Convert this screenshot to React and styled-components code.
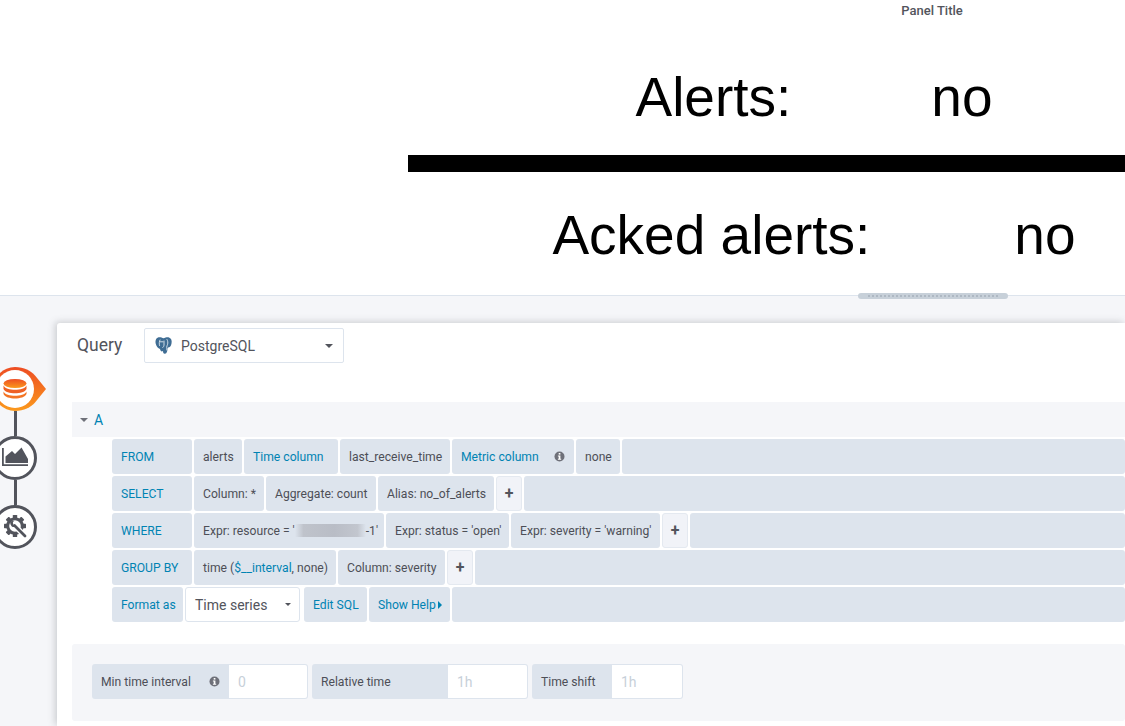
import React from 'react';
import styled, { createGlobalStyle } from 'styled-components';

const GlobalStyle = createGlobalStyle`
  html, body {
    margin: 0;
    padding: 0;
    background: #fff;
    font-family: Roboto, "Liberation Sans", sans-serif;
  }
  * { box-sizing: border-box; }
`;

const Page = styled.div`
  position: relative;
  width: 1125px;
  height: 726px;
  overflow: hidden;
  display: flex;
  flex-direction: column;
`;

const Preview = styled.section`
  height: 296px;
  flex: none;
  padding-left: 408px;
  border-bottom: 1px solid #dde4ed;
  background: #fff;
  overflow: hidden;
`;

const PreviewPanel = styled.div`
  width: 1048px;
  display: flex;
  flex-direction: column;
`;

const PanelTitle = styled.div`
  height: 22px;
  line-height: 22px;
  text-align: center;
  font-size: 13px;
  font-weight: 500;
  color: #52545c;
`;

const StatRow = styled.div`
  width: 812px;
  height: 64px;
  margin-top: ${(p) => p.$top}px;
  display: flex;
  justify-content: center;
  gap: ${(p) => p.$gap}px;
  font-family: "Liberation Sans", Arial, sans-serif;
  font-size: 55px;
  line-height: 64px;
  color: #000;
  white-space: nowrap;
`;

const Rule = styled.div`
  height: 17px;
  margin-top: ${(p) => p.$top}px;
  background: #000;
`;

const Splitter = styled.div`
  position: absolute;
  left: 858px;
  top: 293px;
  width: 150px;
  height: 6px;
  border-radius: 3px;
  background: #c7d0d9;
  &::after {
    content: '';
    position: absolute;
    left: 10px;
    right: 10px;
    top: 2px;
    height: 2px;
    background: repeating-linear-gradient(90deg, #aeb8c3 0 2px, transparent 2px 4px);
  }
`;

const Editor = styled.div`
  flex: 1;
  display: flex;
  min-height: 0;
  background: #f5f6f9;
`;

const Sidebar = styled.nav`
  width: 57px;
  flex: none;
  margin-left: -7px;
  margin-right: 7px;
  padding-top: 71px;
  display: flex;
  flex-direction: column;
  align-items: flex-start;
`;

const Step = styled.div`
  width: 44px;
  height: 44px;
  border: 3px solid #52545c;
  border-radius: 50%;
  background: #fff;
  display: flex;
  align-items: center;
  justify-content: center;
  color: #52545c;
`;

const ActiveStep = styled.svg`
  display: block;
  width: 54px;
  height: 44px;
  overflow: visible;
`;

const Connector = styled.div`
  width: 3px;
  height: 25px;
  margin-left: 20.5px;
  background: #52545c;
`;

const QueryPanel = styled.main`
  flex: 1;
  min-width: 0;
  margin-top: 27px;
  background: #fff;
  border-top-left-radius: 3px;
  box-shadow: -2px -1px 7px rgba(82, 84, 92, 0.26);
`;

const Header = styled.header`
  display: flex;
  align-items: center;
  height: 35px;
  margin-top: 5px;
  padding-left: 20px;
`;

const HeaderTitle = styled.h2`
  width: 67px;
  margin: -2px 0 0;
  font-size: 17.5px;
  font-weight: 400;
  color: #52545c;
`;

const DataSourceSelect = styled.div`
  width: 200px;
  height: 35px;
  padding: 0 10px;
  display: flex;
  align-items: center;
  gap: 9px;
  border: 1px solid #dde4ed;
  border-radius: 2px;
  font-size: 14px;
  color: #52545c;
`;

const Caret = styled.span`
  width: 0;
  height: 0;
  flex: none;
  margin-left: auto;
  border-left: ${(p) => p.$size || 4}px solid transparent;
  border-right: ${(p) => p.$size || 4}px solid transparent;
  border-top: ${(p) => p.$size || 4}px solid #52545c;
`;

const QueryHeader = styled.div`
  height: 35px;
  margin: 39px 0 2px 15px;
  padding-left: 8px;
  display: flex;
  align-items: center;
  gap: 6px;
  background: #f5f6f9;
  font-size: 14px;
  color: #0083b3;
`;

const CollapseCaret = styled(Caret)`
  margin-left: 0;
  border-top-color: #6e7079;
`;

const Rows = styled.div`
  margin-left: 55px;
  display: flex;
  flex-direction: column;
  gap: 2px;
`;

const Row = styled.div`
  display: flex;
  gap: 2px;
  height: 35px;
`;

const Cell = styled.div`
  flex: none;
  width: ${(p) => p.$width}px;
  margin-left: ${(p) => p.$offset || 0}px;
  padding: 0 9px;
  display: flex;
  align-items: center;
  border-radius: 3px;
  background: #dde4ed;
  font-size: 12.15px;
  white-space: nowrap;
  color: ${(p) => (p.$blue ? '#0083b3' : '#4d4f57')};
`;

const Macro = styled.span`
  color: #0083b3;
`;

const Filler = styled.div`
  flex: 1;
  border-radius: 3px;
  background: #dde4ed;
`;

const AddButton = styled.div`
  flex: none;
  width: 26px;
  display: flex;
  align-items: center;
  justify-content: center;
  border: 1px solid #e4e9f0;
  border-radius: 3px;
  background: #f1f3f8;
  font-size: 16px;
  font-weight: 700;
  color: #52545c;
`;

const FormatSelect = styled.div`
  flex: none;
  width: 115px;
  padding: 0 8px 0 9px;
  display: flex;
  align-items: center;
  border: 1px solid #dde4ed;
  border-radius: 3px;
  background: #fff;
  font-size: 14px;
  color: #52545c;
`;

const Redacted = styled.span`
  display: inline-block;
  flex: none;
  width: 71px;
  height: 13px;
  background: linear-gradient(90deg, #dde4ed, #bfc3cb 12%, #b9bdc6 55%, #c2c6ce 88%, #dde4ed);
`;

const TinyArrow = styled.span`
  display: inline-block;
  margin-left: 2px;
  border-top: 4px solid transparent;
  border-bottom: 4px solid transparent;
  border-left: 4px solid #0083b3;
`;

const Options = styled.section`
  margin: 22px 0 0 15px;
  height: 77px;
  padding: 20px;
  display: flex;
  gap: 4px;
  border-radius: 3px;
  background: #f5f6f9;
`;

const OptionGroup = styled.div`
  display: flex;
  height: 35px;
`;

const OptionLabel = styled.div`
  width: ${(p) => p.$width}px;
  padding: 0 9px;
  display: flex;
  align-items: center;
  justify-content: space-between;
  border-radius: 3px 0 0 3px;
  background: #dde4ed;
  font-size: 12.15px;
  color: #4d4f57;
`;

const OptionInput = styled.div`
  width: ${(p) => p.$width}px;
  padding: 0 9px;
  display: flex;
  align-items: center;
  border: 1px solid #dde4ed;
  border-left: 0;
  border-radius: 0 3px 3px 0;
  background: #fff;
  font-size: 14px;
  color: #c7d0d9;
`;

const InfoIcon = ({ style }) => (
  <svg width="11" height="11" viewBox="0 0 11 11" style={style} aria-hidden="true">
    <circle cx="5.5" cy="5.5" r="5" fill="#6e7079" />
    <rect x="4.7" y="2" width="1.7" height="1.6" fill="#fff" />
    <path d="M3.9 4.4h2.5v3.3h.8v1H3.9v-1h.8V5.4h-.8z" fill="#fff" />
  </svg>
);

const PostgresIcon = () => (
  <svg width="17" height="17" viewBox="0 0 17 17" aria-hidden="true">
    <path
      d="M3 .5C5 0 7 .8 8.500 1.300 10 .8 12.500 0 14 .5c2.500.8 3 3.500 2.500 6C16 9 15 10.500 13 10.500l-.5 1c0 2-.5 5-2.500 5.300-1.500.2-2-1.300-2-2.800-1.500 1-2.500 0-3-2-2-.5-3.500-2.500-4.200-5C.2 4.500.5 1.500 3 .5z"
      fill="#3f6d94"
    />
    <path
      d="M5 3c-.8 1.500-1 3.500-.5 5.500M5 4.800h3M12 2.500c.9 1.400 1 3.200.6 4.800-.2 1-.9 1.800-.9 3 0 .9.200 1.700.2 2.700M9 4v4.200c0 1-.5 1.600-1.200 2.300"
      fill="none"
      stroke="#dfe8ef"
      strokeWidth="0.9"
      strokeLinecap="round"
    />
  </svg>
);

const DatabaseStep = () => (
  <ActiveStep viewBox="0 0 54 44">
    <defs>
      <linearGradient id="stepOrange" x1="0" y1="0" x2="0" y2="1">
        <stop offset="0" stopColor="#ed4c23" />
        <stop offset="1" stopColor="#fb9a1d" />
      </linearGradient>
    </defs>
    <path
      d="M22 0A22 22 0 0 0 22 44C31 44 38 40 42 35.500L53 22 42 8.500C38 4 31 0 22 0z"
      fill="url(#stepOrange)"
    />
    <circle cx="22" cy="22" r="19" fill="#fff" />
    <ellipse cx="22" cy="16.500" rx="11.500" ry="4.500" fill="url(#stepOrange)" />
    <path d="M10.500 18.500c1.300 3 6.500 4.200 11.500 4.200s10.200-1.200 11.500-4.200V22c-1.300 3-6.500 4.300-11.500 4.300S11.800 25 10.500 22z" fill="#ee6024" />
    <path d="M10.500 24.500c1.300 3 6.500 4.200 11.500 4.200s10.200-1.200 11.500-4.200V27c-1.300 3-6.500 4.500-11.500 4.500S11.800 30 10.500 27z" fill="#f37424" />
  </ActiveStep>
);

const ChartIcon = () => (
  <svg width="27" height="20" viewBox="0 0 27 20" style={{ marginTop: -2 }} aria-hidden="true">
    <path d="M.9 1v17.100H26" fill="none" stroke="currentColor" strokeWidth="1.800" />
    <path d="M3.500 16V9.500L10 4l3 3 6.500-6.500L26 12v4z" fill="currentColor" />
  </svg>
);

const gearTeeth = Array.from({ length: 8 }, (_, i) => i * 45);

const ToolsIcon = () => (
  <svg width="24" height="24" viewBox="0 0 24 24" style={{ marginLeft: 1, marginTop: -1 }} aria-hidden="true">
    {gearTeeth.map((angle) => (
      <rect key={angle} x="8.800" y="0" width="4.400" height="4.500" rx="0.600" fill="currentColor" transform={`rotate(${angle} 11 11)`} />
    ))}
    <circle cx="11" cy="11" r="7.300" fill="none" stroke="currentColor" strokeWidth="3" />
    <path d="M12 12l9 9" stroke="#fff" strokeWidth="5.400" strokeLinecap="round" />
    <path d="M10.500 10.500l10.500 10.500" stroke="currentColor" strokeWidth="2.800" strokeLinecap="round" />
    <path d="M6.300 7.300a3.800 3.800 0 0 0 5.300 4.400l.3-1.600-2.600-.4-.4-2.600 1.300-.9a3.800 3.800 0 0 0-4.200 1.100z" fill="currentColor" />
  </svg>
);

const App = () => (
  <Page>
    <GlobalStyle />
    <Preview>
      <PreviewPanel>
        <PanelTitle>Panel Title</PanelTitle>
        <StatRow $top={43} $gap={140}>
          <span>Alerts:</span>
          <span>no</span>
        </StatRow>
        <Rule $top={26} />
        <StatRow $top={31} $gap={144}>
          <span>Acked alerts:</span>
          <span>no</span>
        </StatRow>
      </PreviewPanel>
    </Preview>
    <Splitter />

    <Editor>
      <Sidebar>
        <DatabaseStep />
        <Connector />
        <Step>
          <ChartIcon />
        </Step>
        <Connector />
        <Step>
          <ToolsIcon />
        </Step>
      </Sidebar>

      <QueryPanel>
        <Header>
          <HeaderTitle>Query</HeaderTitle>
          <DataSourceSelect>
            <PostgresIcon />
            PostgreSQL
            <Caret />
          </DataSourceSelect>
        </Header>

        <QueryHeader>
          <CollapseCaret />A
        </QueryHeader>

        <Rows>
          <Row>
            <Cell $blue $width={80}>FROM</Cell>
            <Cell $width={48}>alerts</Cell>
            <Cell $blue $width={94}>Time column</Cell>
            <Cell $width={110}>last_receive_time</Cell>
            <Cell $blue $width={122}>
              Metric column
              <InfoIcon style={{ marginLeft: 'auto' }} />
            </Cell>
            <Cell $width={44}>none</Cell>
            <Filler />
          </Row>
          <Row>
            <Cell $blue $width={80}>SELECT</Cell>
            <Cell $width={70}>Column: *</Cell>
            <Cell $width={110}>Aggregate: count</Cell>
            <Cell $width={116}>Alias: no_of_alerts</Cell>
            <AddButton>+</AddButton>
            <Filler />
          </Row>
          <Row>
            <Cell $blue $width={80}>WHERE</Cell>
            <Cell $width={190}>
              Expr: resource = '<Redacted />-1'
            </Cell>
            <Cell $width={123}>Expr: status = 'open'</Cell>
            <Cell $width={149}>Expr: severity = 'warning'</Cell>
            <AddButton>+</AddButton>
            <Filler />
          </Row>
          <Row>
            <Cell $blue $width={80}>GROUP BY</Cell>
            <Cell $width={142}>
              <span>
                time (<Macro>$__interval</Macro>, none)
              </span>
            </Cell>
            <Cell $width={107}>Column: severity</Cell>
            <AddButton>+</AddButton>
            <Filler />
          </Row>
          <Row>
            <Cell $blue $width={71}>Format as</Cell>
            <FormatSelect>
              Time series
              <Caret $size={3} />
            </FormatSelect>
            <Cell $blue $offset={2} $width={63}>Edit SQL</Cell>
            <Cell $blue $width={81}>
              Show Help
              <TinyArrow />
            </Cell>
            <Filler />
          </Row>
        </Rows>

        <Options>
          <OptionGroup>
            <OptionLabel $width={137}>
              Min time interval
              <InfoIcon />
            </OptionLabel>
            <OptionInput $width={79}>0</OptionInput>
          </OptionGroup>
          <OptionGroup>
            <OptionLabel $width={136}>Relative time</OptionLabel>
            <OptionInput $width={80}>1h</OptionInput>
          </OptionGroup>
          <OptionGroup>
            <OptionLabel $width={80}>Time shift</OptionLabel>
            <OptionInput $width={71}>1h</OptionInput>
          </OptionGroup>
        </Options>
      </QueryPanel>
    </Editor>
  </Page>
);

export default App;
